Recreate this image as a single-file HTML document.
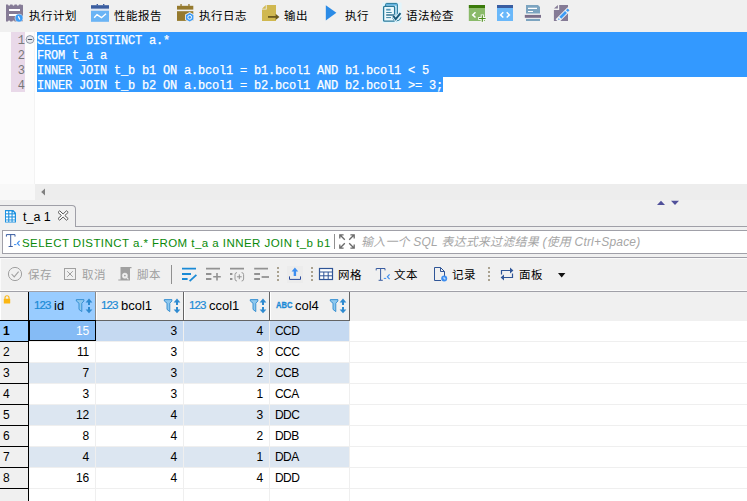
<!DOCTYPE html>
<html><head><meta charset="utf-8">
<style>
*{box-sizing:border-box;margin:0;padding:0}
html,body{width:747px;height:501px;overflow:hidden;background:#f0f0f0}
body{position:relative;font-family:"Liberation Sans","Noto Sans CJK SC",sans-serif;font-size:12px;color:#000}
.abs{position:absolute}
svg{position:absolute;overflow:visible}
.tb{position:absolute;top:0;height:32px;line-height:32px;font-size:11.5px;letter-spacing:0.5px;white-space:nowrap;color:#000}
.ed{position:absolute;left:0;top:32px;width:747px;height:152px;background:#fff}
.gut{position:absolute;left:11px;top:0;width:14px;height:60px;background:#e9d9e9}
.ln{position:absolute;left:0;width:25px;text-align:right;font:12px/15px "Liberation Mono","DejaVu Sans Mono",monospace;color:#787878}
.sel{position:absolute;left:37px;background:#3399ff;height:15px}
.code{position:absolute;left:37px;white-space:pre;font:12px/15px "Liberation Mono","DejaVu Sans Mono",monospace;letter-spacing:-0.2px;color:#fff;-webkit-text-stroke:0.25px #fff}
.t2{position:absolute;top:259px;height:32px;line-height:32px;font-size:11.5px;letter-spacing:0.5px;white-space:nowrap}
.g{color:#a0a0a0}
.hd{position:absolute;top:292px;height:28px;background:#f0f0f0;border-left:1px solid #fff}
.hn{position:absolute;top:0;line-height:27px;font-size:13px;white-space:nowrap}
.ty{position:absolute;top:0;line-height:27px;font-size:11.5px;letter-spacing:-0.85px;color:#1a8ad6;white-space:nowrap;-webkit-text-stroke:0.2px #1a8ad6}
.row{position:absolute;left:29px;width:320px;height:20px}
.c{position:absolute;top:0;height:20px;line-height:21px;font-size:12px;white-space:nowrap}
.r{text-align:right;letter-spacing:-0.2px}
.l{letter-spacing:-0.6px}
.rn{position:absolute;left:0;width:28px;height:20px;line-height:21px;padding-left:3px;font-size:12px;background:#f0f0f0}
.vl{position:absolute;top:321px;width:1px;height:180px;background:#efefef}
.hl{position:absolute;left:29px;width:718px;height:1px;background:#efefef}
.bl{position:absolute;left:0;width:28px;height:1px;background:#000}
.dots{position:absolute;top:267px;width:2px;height:15px;background:repeating-linear-gradient(to bottom,#aaa290 0,#aaa290 2px,transparent 2px,transparent 4px)}
</style></head><body>
<!-- top toolbar icons -->
<svg width="747" height="32" style="left:0;top:0" viewBox="0 0 747 32">
  <!-- plan -->
  <path d="M6,4.6 h2 a1.1,1.1 0 0 0 2.2,0 h2.2 a1.1,1.1 0 0 0 2.2,0 h2.2 a1.1,1.1 0 0 0 2.2,0 h2.2 a1.1,1.1 0 0 0 1.8,0 v17 a1.1,1.1 0 0 0 -1.8,0 h-2.2 a1.1,1.1 0 0 0 -2.2,0 h-2.2 a1.1,1.1 0 0 0 -2.2,0 h-2.2 a1.1,1.1 0 0 0 -2.2,0 h-2 z" fill="#857b96"/>
  <rect x="9" y="9" width="11" height="2" fill="#fff"/>
  <rect x="9" y="14" width="11" height="2" fill="#fff"/>
  <circle cx="19" cy="18" r="4.3" fill="#f0f0f0"/>
  <circle cx="19" cy="18" r="3.7" fill="#3d9bf5"/>
  <path d="M18.3,16.3 L19.8,19.6" stroke="#fff" stroke-width="1.2" fill="none"/>
  <!-- perf report -->
  <rect x="91" y="5.2" width="18" height="3.6" fill="#3a5da0"/>
  <rect x="96.6" y="4" width="1.4" height="1.4" fill="#3a5da0"/>
  <rect x="103" y="4" width="1.4" height="1.4" fill="#3a5da0"/>
  <rect x="91" y="8.8" width="18" height="2" fill="#dbe5f3"/>
  <rect x="91" y="10.8" width="18" height="11" fill="#6ab4f5"/>
  <path d="M94.2,17.7 L97,14.6 L101.5,17.7 L106,13.8" stroke="#fff" stroke-width="1.4" fill="none"/>
  <!-- exec log -->
  <rect x="177" y="5.8" width="16.3" height="3.8" fill="#957a2e"/>
  <rect x="180.4" y="4" width="1.3" height="2" fill="#957a2e"/>
  <rect x="188.3" y="4" width="1.3" height="2" fill="#957a2e"/>
  <rect x="177" y="11.2" width="16.3" height="9.7" fill="#957a2e"/>
  <polygon points="189.7,12 194.3,14.6 194.3,20 189.7,22.6 185.1,20 185.1,14.6" fill="#f0f0f0"/>
  <polygon points="189.7,13 193.4,15.1 193.4,19.5 189.7,21.6 186,19.5 186,15.1" fill="#3d9bf5"/>
  <circle cx="189.7" cy="17.3" r="1.9" fill="none" stroke="#fff" stroke-width="1"/>
  <!-- output -->
  <polygon points="262,8.7 265.8,5 265.8,8.7" fill="#d0b850"/>
  <polygon points="266.7,5 276,5 276,21 262,21 262,9.6 266.7,9.6" fill="#d0b850"/>
  <path d="M268,16.9 H277" stroke="#6b5a1e" stroke-width="1.8" fill="none"/>
  <polygon points="279.4,16.9 275.6,13.8 275.6,20" fill="#6b5a1e"/>
  <!-- run -->
  <polygon points="325.8,5.2 336.4,12.85 325.8,20.5" fill="#2b8be6"/>
  <!-- syntax check -->
  <rect x="382" y="2.4" width="19.6" height="20.8" rx="1" fill="#e2f5fc"/>
  <rect x="385.6" y="3.4" width="11.8" height="17" rx="1" fill="#63b4e2" stroke="#2a7a9a" stroke-width="1"/>
  <rect x="386.4" y="5.6" width="10.2" height="14" fill="#d5eef8"/>
  <rect x="383.6" y="6.4" width="11" height="14.8" rx="1" fill="#ecf9fd" stroke="#2a7a9a" stroke-width="1.3"/>
  <rect x="386.2" y="8.8" width="4.4" height="1.8" fill="#5a9ab8"/>
  <path d="M386.2,12.5 H391.7 M386.2,17.6 H391" stroke="#2a7a9a" stroke-width="0.9" fill="none"/>
  <path d="M386.2,15 H394" stroke="#2a6a88" stroke-width="1.4" fill="none"/>
  <path d="M392.4,17 A4.3,4.3 0 0 0 400.9,17.4" stroke="#2a7a9a" stroke-width="1" fill="#e2f5fc"/>
  <path d="M393.2,15.6 L395.7,19.2 L400.5,13.2" stroke="#e2f5fc" stroke-width="3.6" fill="none"/>
  <path d="M393.2,15.6 L395.7,19.2 L400.5,13.2" stroke="#1a5a7a" stroke-width="1.9" fill="none"/>
  <!-- green -->
  <rect x="468.8" y="5" width="16.2" height="3" fill="#3a7a0a"/>
  <rect x="468.8" y="8" width="16.2" height="13" fill="#8aba6a"/>
  <path d="M475.5,12.3 L472.7,14.9 L475.5,17.5" stroke="#fff" stroke-width="1.5" fill="none"/>
  <path d="M482.3,14.4 V22.6 M478.2,18.5 H486.4" stroke="#f6f9f3" stroke-width="3.2" fill="none"/>
  <path d="M482.3,15.2 V21.8 M479,18.5 H485.6" stroke="#4a8a1a" stroke-width="1.1" fill="none"/>
  <!-- blue -->
  <rect x="497" y="5" width="16" height="3" fill="#3a5da0"/>
  <rect x="497" y="8" width="16" height="13" fill="#6ab8fa"/>
  <path d="M503.3,12.3 L500.6,14.9 L503.3,17.5 M506.7,12.3 L509.4,14.9 L506.7,17.5" stroke="#fff" stroke-width="1.5" fill="none"/>
  <!-- lines -->
  <polygon points="526,5 538,5 540,7 540,13.6 526,13.6" fill="#7ca4c0"/>
  <path d="M528,8.3 H537 M528,11.5 H533" stroke="#fff" stroke-width="1.2" fill="none"/>
  <rect x="524.8" y="14.9" width="16.2" height="2.9" fill="#7a6e8a"/>
  <rect x="526" y="18.9" width="14" height="2.1" fill="#7ca4c0"/>
  <!-- edit doc -->
  <polygon points="553.9,8.6 557.9,4.9 557.9,8.6" fill="#857b96"/>
  <polygon points="559.2,4.9 568,4.9 568,20.9 553.9,20.9 553.9,10.1 559.2,10.1" fill="#857b96"/>
  <path d="M557.2,20.8 L569.2,8.9" stroke="#f3f3f3" stroke-width="4.6" fill="none"/>
  <path d="M560.3,17.7 L566,12" stroke="#3d9bf5" stroke-width="2.7" fill="none"/>
  <path d="M566.9,11.1 L568.6,9.4" stroke="#3d9bf5" stroke-width="2.7" fill="none"/>
  <polygon points="557.7,20.2 558.5,17.7 560.2,19.4" fill="#7dbcf7"/>
</svg>
<div class="tb" style="left:29px">执行计划</div>
<div class="tb" style="left:114px">性能报告</div>
<div class="tb" style="left:199px">执行日志</div>
<div class="tb" style="left:284px">输出</div>
<div class="tb" style="left:345px">执行</div>
<div class="tb" style="left:406px">语法检查</div>

<!-- editor -->
<div class="ed">
  <div class="abs" style="left:0;top:0;width:35px;height:152px;background:#fcfcfc;border-right:1px solid #f3f3f3"></div>
  <div class="gut"></div>
  <div class="ln" style="top:2px">1</div>
  <div class="ln" style="top:17px">2</div>
  <div class="ln" style="top:32px">3</div>
  <div class="ln" style="top:47px">4</div>
  <div class="sel" style="top:0;width:710px;height:45px"></div>
  <div class="sel" style="top:45px;width:406px"></div>
  <div class="code" style="top:2px">SELECT DISTINCT a.*</div>
  <div class="code" style="top:17px">FROM t_a a</div>
  <div class="code" style="top:32px">INNER JOIN t_b b1 ON a.bcol1 = b1.bcol1 AND b1.bcol1 &lt; 5</div>
  <div class="code" style="top:47px">INNER JOIN t_b b2 ON a.bcol1 = b2.bcol1 AND b2.bcol1 &gt;= 3;</div>
  <svg width="12" height="12" style="left:25px;top:1px" viewBox="0 0 12 12"><circle cx="5" cy="6.5" r="3.9" fill="#e6e9ef" stroke="#8890a0" stroke-width="0.9"/><path d="M2.8,6.5 H7.2" stroke="#4a5260" stroke-width="1"/></svg>
</div>

<!-- h scrollbar -->
<div class="abs" style="left:0;top:184px;width:35px;height:16px;background:#f8f8f8"></div>
<div class="abs" style="left:35px;top:184px;width:712px;height:16px;background:#ededed"></div>
<svg width="10" height="10" style="left:40px;top:186.6px" viewBox="0 0 10 10"><polygon points="1.2,5 5,1.6 5,8.4" fill="#808080"/></svg>
<svg width="30" height="8" style="left:655px;top:199px" viewBox="0 0 30 8"><polygon points="2,6 10,6 6,1.8" fill="#50509a"/><polygon points="16,1.8 24,1.8 20,6" fill="#50509a"/></svg>
<!-- tab -->
<div class="abs" style="left:0;top:226px;width:747px;height:1px;background:#a0a0a8"></div>
<div class="abs" style="left:-1px;top:205px;width:77px;height:22px;background:#f0f0f0;border:1px solid #a0a0a8;border-bottom:none;border-radius:0 4px 0 0"></div>
<svg width="12" height="13" style="left:5px;top:209.5px" viewBox="0 0 12 13">
  <polygon points="0,0 8.3,0 11,2.7 11,12.5 0,12.5" fill="#1e92e0"/>
  <g fill="#fff"><rect x="1" y="1.3" width="2.2" height="2"/><rect x="4.3" y="1.3" width="2.2" height="2"/><rect x="7.6" y="2.3" width="1.4" height="1"/>
  <rect x="1" y="4.4" width="2.2" height="2"/><rect x="4.3" y="4.4" width="2.2" height="2"/><rect x="7.6" y="4.4" width="2.2" height="2"/>
  <rect x="1" y="7.5" width="2.2" height="2"/><rect x="4.3" y="7.5" width="2.2" height="2"/><rect x="7.6" y="7.5" width="2.2" height="2"/>
  <rect x="1" y="10.4" width="2.2" height="1.3"/><rect x="4.3" y="10.4" width="2.2" height="1.3"/><rect x="7.6" y="10.4" width="2.2" height="1.3"/></g>
</svg>
<div class="abs" style="left:23px;top:205px;line-height:24px;font-size:12.5px;white-space:nowrap">t_a 1</div>
<svg width="14" height="12" style="left:57px;top:210.4px" viewBox="0 0 14 12"><path d="M1,2.4 L2.7,0.8 L6.1,4 L9.5,0.8 L11.2,2.4 L7.8,5.5 L11.2,8.6 L9.5,10.2 L6.1,7 L2.7,10.2 L1,8.6 L4.4,5.5 Z" fill="#fff" stroke="#555" stroke-width="1"/></svg>

<!-- filter box -->
<div class="abs" style="left:2px;top:230px;width:760px;height:24px;background:#fff;border:1px solid #a0a0a8"></div>
<svg width="16" height="14" style="left:6px;top:234px" viewBox="0 0 16 14">
  <path d="M0.4,2.6 V0.6 H9 V2.6 M4.7,0.6 V12.2 M2.6,12.5 H6.8" stroke="#3a5da0" stroke-width="1" fill="none"/>
  <path d="M8,10.6 H10.4" stroke="#3d8ef0" stroke-width="1" fill="none"/>
  <path d="M13.6,6.8 L11.4,9.2 L13.6,11.6" stroke="#3d8ef0" stroke-width="1.2" fill="none"/>
</svg>
<div class="abs" style="left:22px;top:230px;line-height:26px;font-size:11.5px;letter-spacing:0.45px;color:#0a8a0a;white-space:nowrap">SELECT DISTINCT a.* FROM t_a a INNER JOIN t_b b1</div>
<div class="abs" style="left:334px;top:234px;width:1px;height:15px;background:#909090"></div>
<svg width="16" height="15" style="left:339px;top:234px" viewBox="0 0 16 15">
  <g stroke="#6a6a6a" stroke-width="1.3" fill="none">
  <path d="M0.8,4.6 V0.8 H4.6 M0.8,0.8 L5.8,5.8"/>
  <path d="M15.2,4.6 V0.8 H11.4 M15.2,0.8 L10.2,5.8"/>
  <path d="M0.8,10.4 V14.2 H4.6 M0.8,14.2 L5.8,9.2"/>
  <path d="M15.2,10.4 V14.2 H11.4 M15.2,14.2 L10.2,9.2"/>
  </g>
</svg>
<div class="abs" style="left:361px;top:230px;line-height:24px;font-size:12px;letter-spacing:0.2px;color:#a6a6a6;font-style:italic;white-space:nowrap">输入一个 SQL 表达式来过滤结果 (使用 Ctrl+Space)</div>

<!-- toolbar 2 -->
<div class="abs" style="left:0;top:257px;width:747px;height:1px;background:#a0a0a8"></div>
<div class="abs" style="left:0;top:258px;width:747px;height:1px;background:#fafafa"></div>
<div class="abs" style="left:0;top:258px;width:1px;height:33px;background:#fafafa"></div>
<div class="abs" style="left:0;top:291px;width:747px;height:1px;background:#a0a0a8"></div>
<svg width="580" height="34" style="left:0;top:257px" viewBox="0 257 580 34">
  <!-- save -->
  <circle cx="15" cy="274" r="6.6" fill="none" stroke="#a0a0a0" stroke-width="1"/>
  <path d="M11.6,274 L14.2,276.8 L18.6,271.6" stroke="#a0a0a0" stroke-width="1.1" fill="none"/>
  <!-- cancel -->
  <rect x="64.5" y="268.5" width="11" height="11" fill="none" stroke="#a0a0a0" stroke-width="1"/>
  <path d="M67.2,271.2 L72.8,276.8 M72.8,271.2 L67.2,276.8" stroke="#a0a0a0" stroke-width="1" fill="none"/>
  <!-- script -->
  <path d="M120.5,267 H131.5 V268.2 H130 V280.6 H118.3 V279.4 H120.5 Z" fill="#a0a0a0"/>
  <circle cx="124.9" cy="275.7" r="2.6" fill="#f0f0f0" stroke="#e8e8e8" stroke-width="0.6"/>
  <circle cx="124.9" cy="275.6" r="0.9" fill="#a0a0a0"/>
  <path d="M126.6,277.4 L128.4,279.3" stroke="#f0f0f0" stroke-width="1.1"/>
  <!-- sep -->
  <rect x="171" y="265" width="1" height="19" fill="#909090"/>
  <!-- edit rows (blue) -->
  <path d="M182,268.6 H196 M182,274 H191 M182,279 H187.6" stroke="#1a8ad6" stroke-width="1.8" fill="none"/>
  <path d="M189.6,281.2 L196.4,274.8" stroke="#1a8ad6" stroke-width="1.8" fill="none"/>
  <!-- add row -->
  <path d="M206,268.6 H220 M206,274 H211.4 M206,279 H211.4" stroke="#929292" stroke-width="1.8" fill="none"/>
  <path d="M217,273 V280.6 M213.2,276.8 H220.8" stroke="#929292" stroke-width="1.6" fill="none"/>
  <!-- copy row -->
  <path d="M230,268.6 H244 M230,274 H232.4 M230,279 H232.4" stroke="#929292" stroke-width="1.8" fill="none"/>
  <path d="M237,272.6 Q235,272.6 235,274.6 V279 Q235,281 237,281 M241.6,272.6 Q243.6,272.6 243.6,274.6 V279 Q243.6,281 241.6,281" stroke="#929292" stroke-width="0.9" fill="none"/>
  <path d="M239.3,274.4 V279.2 M236.9,276.8 H241.7" stroke="#929292" stroke-width="1" fill="none"/>
  <!-- delete row -->
  <path d="M254.2,268.6 H268 M254.2,274 H260 M254.2,279 H260" stroke="#929292" stroke-width="1.8" fill="none"/>
  <path d="M261.6,277 H269" stroke="#929292" stroke-width="1.8" fill="none"/>
  <!-- upload -->
  <rect x="287" y="266" width="16" height="17" fill="#ececec"/>
  <path d="M294.9,270.4 V276" stroke="#3d8ef0" stroke-width="2.4" fill="none"/>
  <polygon points="294.9,267.6 291.6,271.4 298.2,271.4" fill="#3d8ef0"/>
  <path d="M289.5,276.4 V279.4 H300.5 V276.4" stroke="#2a4a9a" stroke-width="1" fill="none"/>
  <!-- grid -->
  <rect x="319.5" y="268.5" width="13" height="11" fill="#fff" stroke="#2f5597" stroke-width="1.2"/>
  <path d="M319.5,272 H332.5 M319.5,275.8 H332.5 M323.8,272 V279.5 M328.2,272 V279.5" stroke="#2f5597" stroke-width="1" fill="none"/>
  <!-- text T -->
  <path d="M376.2,270.4 V268.5 H385 V270.4 M380.6,268.5 V280 M378.6,280.3 H382.8" stroke="#3a5da0" stroke-width="1" fill="none"/>
  <path d="M383.8,278.4 H386.2" stroke="#3d8ef0" stroke-width="1" fill="none"/>
  <path d="M389.6,274.4 L387.4,276.8 L389.6,279.2" stroke="#3d8ef0" stroke-width="1.2" fill="none"/>
  <!-- record -->
  <path d="M434.5,267.5 H440.5 L444.5,271.5 V276 M434.5,267.5 V280.5 H441" stroke="#2f5597" stroke-width="1" fill="none"/>
  <path d="M440.5,267.5 V271.5 H444.5" stroke="#2f5597" stroke-width="1" fill="none"/>
  <circle cx="444.2" cy="278.6" r="3" fill="#3d8ef0"/>
  <path d="M444,277 V278.9 H445.6" stroke="#fff" stroke-width="0.8" fill="none"/>
  <!-- panels -->
  <path d="M501.5,274.5 V270.5 H512 M512.5,273.5 V277.5 H502" stroke="#2f5597" stroke-width="1.2" fill="none"/>
  <polygon points="513.4,270.5 510,267.6 510,273.4" fill="#2f5597"/>
  <polygon points="500.6,277.5 504,274.6 504,280.4" fill="#2f5597"/>
  <!-- dropdown -->
  <polygon points="558,273 565.4,273 561.7,277.4" fill="#111"/>
</svg>
<div class="dots" style="left:277px"></div>
<div class="dots" style="left:311px"></div>
<div class="dots" style="left:488px"></div>
<div class="t2 g" style="left:28px">保存</div>
<div class="t2 g" style="left:82px">取消</div>
<div class="t2 g" style="left:137px">脚本</div>
<div class="t2" style="left:338px">网格</div>
<div class="t2" style="left:394px">文本</div>
<div class="t2" style="left:452px">记录</div>
<div class="t2" style="left:519px">面板</div>
<!-- grid -->
<div class="abs" style="left:0;top:290px;width:747px;height:1px;background:#fafafa"></div>
<div class="abs" style="left:0;top:321px;width:747px;height:180px;background:#fff"></div>
<div class="hl" style="top:341px"></div>
<div class="hl" style="top:362px"></div>
<div class="hl" style="top:383px"></div>
<div class="hl" style="top:404px"></div>
<div class="hl" style="top:425px"></div>
<div class="hl" style="top:446px"></div>
<div class="hl" style="top:467px"></div>
<div class="hl" style="top:488px"></div>
<div class="hd" style="left:0;width:28px"><svg width="8" height="10" style="left:2px;top:3px" viewBox="0 0 8 10"><path d="M2,4.5 V2.8 a2,2 0 0 1 4,0 V4.5" stroke="#fbb612" stroke-width="1.1" fill="none"/><rect x="0.8" y="3.8" width="6.4" height="4.8" rx="0.6" fill="#fbb612"/></svg></div>
<div class="hd" style="left:29px;width:66px;background:#99ccff;border-left-color:#99ccff"><span class="ty" style="left:4px">123</span><span class="hn" style="left:24px">id</span><svg width="66" height="28" style="left:-1px;top:0" viewBox="0 0 66 28"><path d="M47.3,7.6 H54.9 V9 L52.8,11.2 V19.6 L50,17.4 V11.2 L47.3,9 Z" fill="#8ec8ee" stroke="#2e8ad0" stroke-width="0.9"/><path d="M60,9 V12.9 M60,14.9 V19" stroke="#2e8ad0" stroke-width="2" fill="none"/><polygon points="60,6.6 56.6,10.4 63.4,10.4" fill="#2e8ad0"/><polygon points="60,21.2 56.6,17.4 63.4,17.4" fill="#2e8ad0"/></svg></div>
<div class="hd" style="left:96px;width:87px"><span class="ty" style="left:4px">123</span><span class="hn" style="left:24px">bcol1</span><svg width="87" height="28" style="left:-1px;top:0" viewBox="0 0 87 28"><path d="M68.3,7.6 H75.9 V9 L73.8,11.2 V19.6 L71,17.4 V11.2 L68.3,9 Z" fill="#8ec8ee" stroke="#2e8ad0" stroke-width="0.9"/><path d="M81,9 V12.9 M81,14.9 V19" stroke="#2e8ad0" stroke-width="2" fill="none"/><polygon points="81,6.6 77.6,10.4 84.4,10.4" fill="#2e8ad0"/><polygon points="81,21.2 77.6,17.4 84.4,17.4" fill="#2e8ad0"/></svg></div>
<div class="hd" style="left:184px;width:85px"><span class="ty" style="left:4px">123</span><span class="hn" style="left:24px">ccol1</span><svg width="85" height="28" style="left:-1px;top:0" viewBox="0 0 85 28"><path d="M66.3,7.6 H73.9 V9 L71.8,11.2 V19.6 L69,17.4 V11.2 L66.3,9 Z" fill="#8ec8ee" stroke="#2e8ad0" stroke-width="0.9"/><path d="M79,9 V12.9 M79,14.9 V19" stroke="#2e8ad0" stroke-width="2" fill="none"/><polygon points="79,6.6 75.6,10.4 82.4,10.4" fill="#2e8ad0"/><polygon points="79,21.2 75.6,17.4 82.4,17.4" fill="#2e8ad0"/></svg></div>
<div class="hd" style="left:270px;width:79px"><span class="ty" style="left:5px;font-weight:bold;font-size:9.5px;letter-spacing:0;line-height:26px;transform:scaleX(0.8);transform-origin:0 50%;-webkit-text-stroke:0.3px #1a8ad6">ABC</span><span class="hn" style="left:24px">col4</span><svg width="79" height="28" style="left:-1px;top:0" viewBox="0 0 79 28"><path d="M60.3,7.6 H67.9 V9 L65.8,11.2 V19.6 L63,17.4 V11.2 L60.3,9 Z" fill="#8ec8ee" stroke="#2e8ad0" stroke-width="0.9"/><path d="M73,9 V12.9 M73,14.9 V19" stroke="#2e8ad0" stroke-width="2" fill="none"/><polygon points="73,6.6 69.6,10.4 76.4,10.4" fill="#2e8ad0"/><polygon points="73,21.2 69.6,17.4 76.4,17.4" fill="#2e8ad0"/></svg></div>
<div class="abs" style="left:0;top:320px;width:350px;height:1px;background:#646464"></div>
<div class="abs" style="left:95px;top:292px;height:29px;width:1px;background:#8a8a8a"></div>
<div class="abs" style="left:183px;top:292px;height:29px;width:1px;background:#646464"></div>
<div class="abs" style="left:269px;top:292px;height:29px;width:1px;background:#646464"></div>
<div class="abs" style="left:349px;top:292px;height:29px;width:1px;background:#646464"></div>
<div class="row" style="top:321px;background:#c5d9f1"><span class="c r" style="left:0;width:60px;color:#fff">15</span><span class="c r" style="left:67px;width:81px">3</span><span class="c r" style="left:155px;width:79px">4</span><span class="c l" style="left:246px">CCD</span></div>
<div class="rn" style="top:321px;background:#99ccff;font-weight:bold">1</div>
<div class="row" style="top:342px;background:#fff"><span class="c r" style="left:0;width:60px">11</span><span class="c r" style="left:67px;width:81px">3</span><span class="c r" style="left:155px;width:79px">3</span><span class="c l" style="left:246px">CCC</span></div>
<div class="rn" style="top:342px">2</div>
<div class="row" style="top:363px;background:#dce6f1"><span class="c r" style="left:0;width:60px">7</span><span class="c r" style="left:67px;width:81px">3</span><span class="c r" style="left:155px;width:79px">2</span><span class="c l" style="left:246px">CCB</span></div>
<div class="rn" style="top:363px">3</div>
<div class="row" style="top:384px;background:#fff"><span class="c r" style="left:0;width:60px">3</span><span class="c r" style="left:67px;width:81px">3</span><span class="c r" style="left:155px;width:79px">1</span><span class="c l" style="left:246px">CCA</span></div>
<div class="rn" style="top:384px">4</div>
<div class="row" style="top:405px;background:#dce6f1"><span class="c r" style="left:0;width:60px">12</span><span class="c r" style="left:67px;width:81px">4</span><span class="c r" style="left:155px;width:79px">3</span><span class="c l" style="left:246px">DDC</span></div>
<div class="rn" style="top:405px">5</div>
<div class="row" style="top:426px;background:#fff"><span class="c r" style="left:0;width:60px">8</span><span class="c r" style="left:67px;width:81px">4</span><span class="c r" style="left:155px;width:79px">2</span><span class="c l" style="left:246px">DDB</span></div>
<div class="rn" style="top:426px">6</div>
<div class="row" style="top:447px;background:#dce6f1"><span class="c r" style="left:0;width:60px">4</span><span class="c r" style="left:67px;width:81px">4</span><span class="c r" style="left:155px;width:79px">1</span><span class="c l" style="left:246px">DDA</span></div>
<div class="rn" style="top:447px">7</div>
<div class="row" style="top:468px;background:#fff"><span class="c r" style="left:0;width:60px">16</span><span class="c r" style="left:67px;width:81px">4</span><span class="c r" style="left:155px;width:79px">4</span><span class="c l" style="left:246px">DDD</span></div>
<div class="rn" style="top:468px">8</div>
<div class="rn" style="top:489px;height:12px"></div>
<div class="vl" style="left:95px"></div>
<div class="vl" style="left:183px"></div>
<div class="vl" style="left:269px"></div>
<div class="vl" style="left:349px"></div>
<div class="bl" style="top:320px"></div>
<div class="bl" style="top:341px"></div>
<div class="bl" style="top:362px"></div>
<div class="bl" style="top:383px"></div>
<div class="bl" style="top:404px"></div>
<div class="bl" style="top:425px"></div>
<div class="bl" style="top:446px"></div>
<div class="bl" style="top:467px"></div>
<div class="bl" style="top:488px"></div>
<div class="abs" style="left:28px;top:292px;width:1px;height:209px;background:#000"></div>
<div class="abs" style="left:29px;top:320px;width:67px;height:21px;border:1px solid #000;background:#85bbf5"></div>
<div class="abs c r" style="left:30px;top:321px;width:59px;color:#fff">15</div>
</body></html>
